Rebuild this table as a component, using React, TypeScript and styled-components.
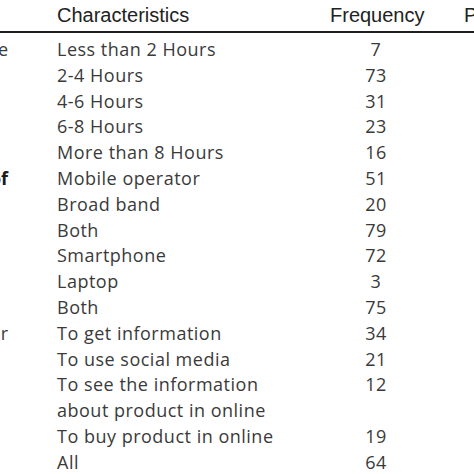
import React from "react";
import styled, { createGlobalStyle } from "styled-components";

const Global = createGlobalStyle`
  html, body { margin: 0; padding: 0; background: #fff; overflow: hidden; }
  body { width: 474px; height: 474px; }
`;

const Table = styled.div`
  width: 620px;
  display: grid;
  grid-template-columns: 57px 273px 92px 42px 156px;
  font-family: "Open Sans", "Liberation Sans", sans-serif;
`;

const HeadCell = styled.div<{ $align?: string }>`
  height: 31px;
  line-height: 31px;
  border-bottom: 2px solid #1f1f1f;
  font-family: "Liberation Sans", Arial, sans-serif;
  font-size: 20px;
  color: #222;
  white-space: nowrap;
  text-align: ${(p) => p.$align || "left"};
`;

const Body = styled.div`
  display: contents;
`;

const Cell = styled.div<{ $align?: string; $first?: boolean }>`
  font-size: 18px;
  letter-spacing: 0.5px;
  line-height: 25.8px;
  color: #3a3a3a;
  white-space: nowrap;
  text-align: ${(p) => p.$align || "left"};
  padding-top: ${(p) => (p.$first ? "4px" : "0")};
`;

const GroupLabel = styled.div<{ $bold?: boolean; $first?: boolean }>`
  font-size: 18px;
  line-height: 25.8px;
  color: ${(p) => (p.$bold ? "#1a1a1a" : "#3a3a3a")};
  font-weight: ${(p) => (p.$bold ? 700 : 400)};
  white-space: nowrap;
  direction: rtl;
  text-align: right;
  padding-right: 49px;
  padding-top: ${(p) => (p.$first ? "4px" : "0")};
`;

type Row = { label?: string; bold?: boolean; text: React.ReactNode; freq: string };

const rows: Row[] = [
  { label: "Time", text: "Less than 2 Hours", freq: "7" },
  { text: "2-4 Hours", freq: "73" },
  { text: "4-6 Hours", freq: "31" },
  { text: "6-8 Hours", freq: "23" },
  { text: "More than 8 Hours", freq: "16" },
  { label: "Source of", bold: true, text: "Mobile operator", freq: "51" },
  { text: "Broad band", freq: "20" },
  { text: "Both", freq: "79" },
  { text: "Smartphone", freq: "72" },
  { text: "Laptop", freq: "3" },
  { text: "Both", freq: "75" },
  { label: "Purpose r", text: "To get information", freq: "34" },
  { text: "To use social media", freq: "21" },
  {
    text: (
      <>
        To see the information
        <br />
        about product in online
      </>
    ),
    freq: "12",
  },
  { text: "To buy product in online", freq: "19" },
  { text: "All", freq: "64" },
];

export default function App() {
  return (
    <>
      <Global />
      <Table>
        <HeadCell />
        <HeadCell>Characteristics</HeadCell>
        <HeadCell $align="center">Frequency</HeadCell>
        <HeadCell />
        <HeadCell>Percent (%)</HeadCell>
        <Body>
          {rows.map((r, i) => (
            <React.Fragment key={i}>
              <GroupLabel $bold={r.bold} $first={i === 0}>
                {r.label ? <bdi>{r.label}</bdi> : "\u00a0"}
              </GroupLabel>
              <Cell $first={i === 0}>{r.text}</Cell>
              <Cell $first={i === 0} $align="center">{r.freq}</Cell>
              <Cell $first={i === 0} />
              <Cell $first={i === 0} />
            </React.Fragment>
          ))}
        </Body>
      </Table>
    </>
  );
}
